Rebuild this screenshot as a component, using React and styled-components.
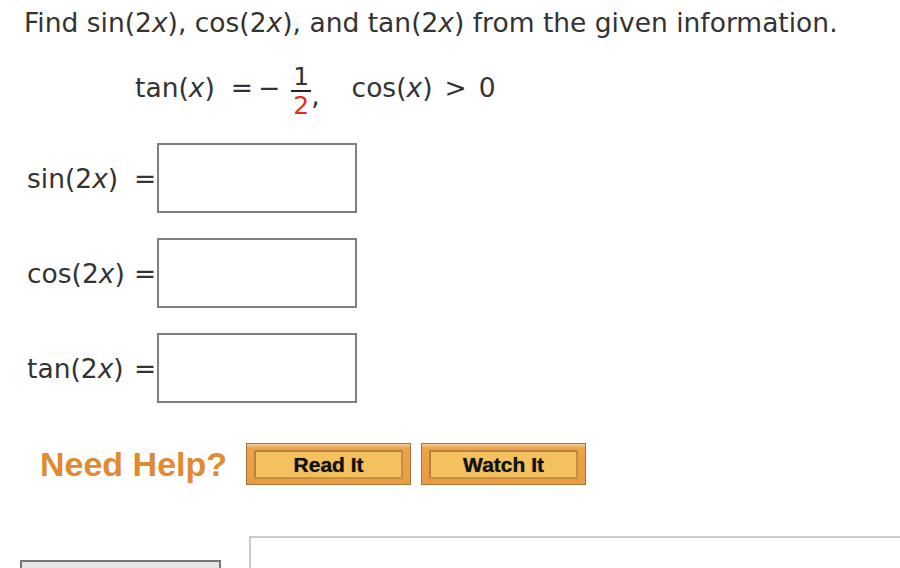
import React from "react";
import styled, { createGlobalStyle } from "styled-components";

const Global = createGlobalStyle`
  html, body { margin: 0; padding: 0; background: #fff; }
  body { font-family: "DejaVu Sans", Verdana, sans-serif; color: #333; overflow: hidden; }
`;

const Page = styled.div`
  width: 900px;
  height: 568px;
  overflow: hidden;
  position: relative;
`;

const Title = styled.div`
  font-size: 26.5px;
  line-height: 32px;
  padding: 7px 0 0 24px;
  white-space: nowrap;
`;

const Var = styled.i`
  font-style: italic;
`;

const MathLine = styled.div`
  display: flex;
  align-items: center;
  font-size: 26.5px;
  line-height: 32px;
  margin: 17px 0 0 135px;
  white-space: nowrap;
`;

const Op = styled.span`
  margin: 0 ${(p) => p.$r ?? 12}px 0 ${(p) => p.$l ?? 12}px;
`;

const Fraction = styled.span`
  display: inline-flex;
  flex-direction: column;
  align-items: center;
  font-size: 25px;
  margin-left: 11px;
  margin-top: 10px;
`;

const Num = styled.span`
  line-height: 22px;
  padding: 0 2px 2px;
  color: #333;
`;

const Bar = styled.span`
  align-self: stretch;
  height: 2px;
  background: #222;
`;

const Den = styled.span`
  line-height: 26px;
  color: #e8281e;
  padding-top: 1px;
`;

const Comma = styled.span`
  align-self: flex-start;
  margin-top: 24px;
  margin-right: 32px;
`;

const Rows = styled.div`
  display: grid;
  grid-template-columns: 107px auto 200px;
  column-gap: 0;
  row-gap: 25px;
  align-items: center;
  margin: 24px 0 0 27px;
  width: max-content;
  font-size: 26.5px;
`;

const Label = styled.span`
  white-space: nowrap;
`;

const Eq = styled.span`
  padding-right: 1px;
`;

const AnswerBox = styled.div`
  box-sizing: border-box;
  width: 200px;
  height: 70px;
  border: 2px solid #808080;
  background: #fff;
`;

const HelpRow = styled.div`
  display: flex;
  align-items: center;
  margin: 40px 0 0 40px;
`;

const NeedHelp = styled.span`
  font-family: "Liberation Sans", Arial, sans-serif;
  font-weight: bold;
  font-size: 34px;
  color: #e08a32;
  margin-right: 19px;
  white-space: nowrap;
`;

const HelpButton = styled.button`
  box-sizing: border-box;
  width: 165px;
  height: 42px;
  padding: 6px 7px 5px 7px;
  margin-right: 10px;
  border: 1px solid #a87438;
  background: linear-gradient(#f7cf96 0px, #eba34c 4px, #e99c42 100%);
  cursor: pointer;
  display: flex;
`;

const HelpInner = styled.span`
  flex: 1;
  display: flex;
  align-items: center;
  justify-content: center;
  border: 2px solid #c98e45;
  border-top-color: #b88140;
  border-left-color: #b88140;
  background: #f3c15e;
  font-family: "Liberation Sans", Arial, sans-serif;
  font-weight: bold;
  font-size: 21px;
  color: #111;
  text-shadow: 0 0 1px rgba(0, 0, 0, 0.6);
`;

const Footer = styled.div`
  display: flex;
  align-items: flex-start;
  margin-top: 51px;
`;

const SubmitBox = styled.div`
  box-sizing: border-box;
  width: 201px;
  height: 40px;
  margin: 24px 0 0 20px;
  border: 2px solid #777;
  background: #e6e6e6;
`;

const Panel = styled.div`
  flex: 1;
  height: 60px;
  margin-left: 28px;
  margin-right: -10px;
  border-top: 2px solid #cccccc;
  border-left: 2px solid #cccccc;
`;

const rows = ["sin", "cos", "tan"];

export default function App() {
  return (
    <Page>
      <Global />
      <Title>
        Find sin(2<Var>x</Var>), cos(2<Var>x</Var>), and tan(2<Var>x</Var>) from the given information.
      </Title>
      <MathLine>
        <span>
          tan(<Var>x</Var>)
        </span>
        <Op $l={16} $r={5}>=</Op>
        <span>−</span>
        <Fraction>
          <Num>1</Num>
          <Bar />
          <Den>2</Den>
        </Fraction>
        <Comma>,</Comma>
        <span>
          cos(<Var>x</Var>)
        </span>
        <Op>&gt;</Op>
        <span>0</span>
      </MathLine>
      <Rows>
        {rows.map((f) => (
          <React.Fragment key={f}>
            <Label>
              {f}(2<Var>x</Var>)
            </Label>
            <Eq>=</Eq>
            <AnswerBox />
          </React.Fragment>
        ))}
      </Rows>
      <HelpRow>
        <NeedHelp>Need Help?</NeedHelp>
        <HelpButton>
          <HelpInner>Read It</HelpInner>
        </HelpButton>
        <HelpButton>
          <HelpInner>Watch It</HelpInner>
        </HelpButton>
      </HelpRow>
      <Footer>
        <SubmitBox />
        <Panel />
      </Footer>
    </Page>
  );
}
